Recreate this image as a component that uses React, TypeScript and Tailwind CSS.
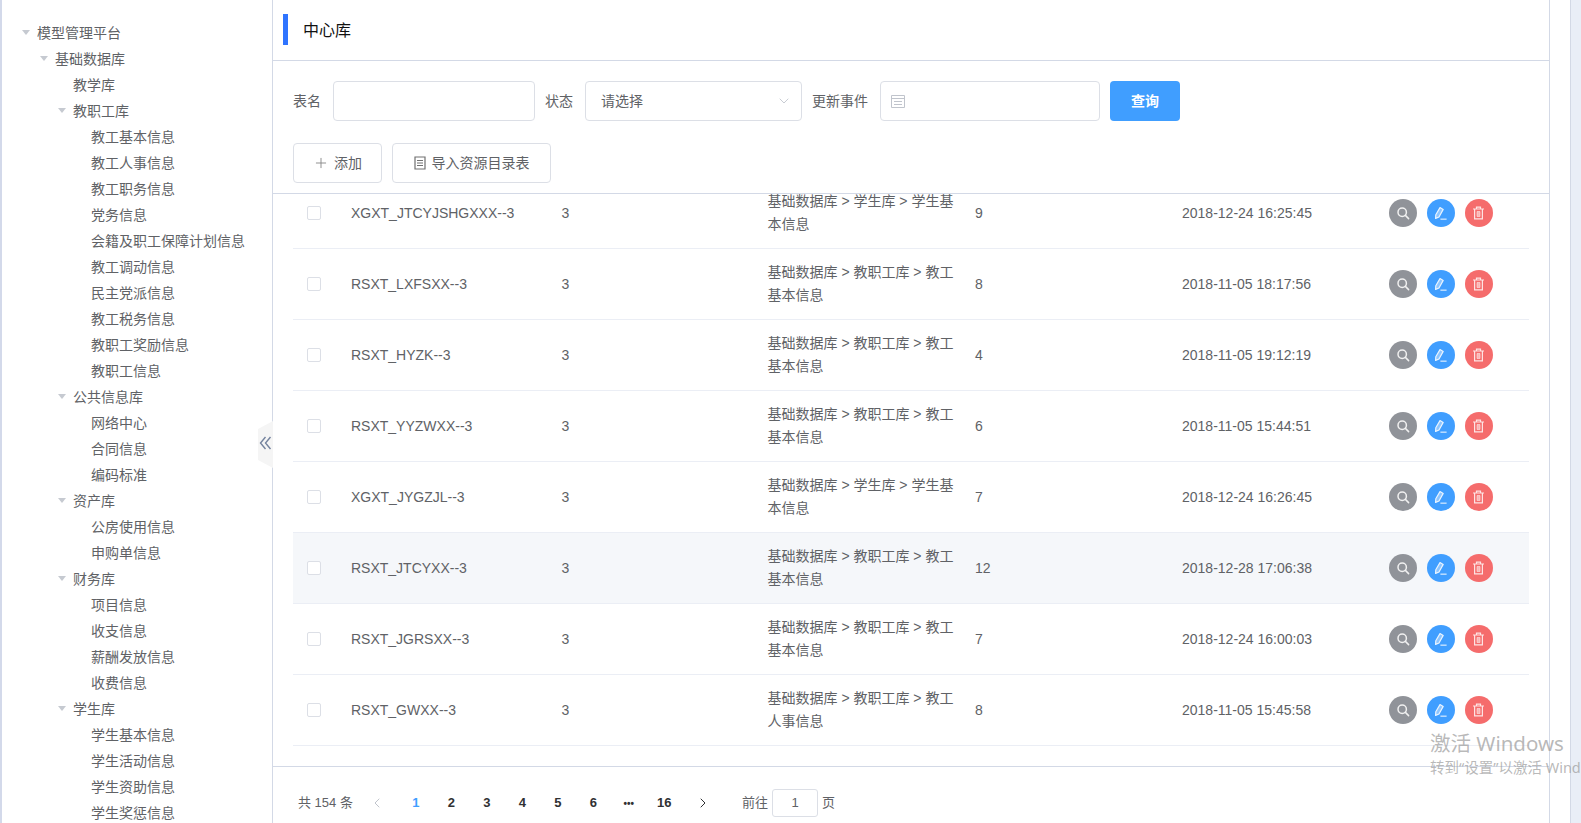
import { ChevronDown, ChevronLeft, ChevronRight, Plus } from 'lucide-react';

const font = { fontFamily: '"Liberation Sans", "Noto Sans CJK SC", sans-serif' };

const treeItems: [string, number, boolean][] = [
  ['模型管理平台', 0, true],
  ['基础数据库', 1, true],
  ['教学库', 2, false],
  ['教职工库', 2, true],
  ['教工基本信息', 3, false],
  ['教工人事信息', 3, false],
  ['教工职务信息', 3, false],
  ['党务信息', 3, false],
  ['会籍及职工保障计划信息', 3, false],
  ['教工调动信息', 3, false],
  ['民主党派信息', 3, false],
  ['教工税务信息', 3, false],
  ['教职工奖励信息', 3, false],
  ['教职工信息', 3, false],
  ['公共信息库', 2, true],
  ['网络中心', 3, false],
  ['合同信息', 3, false],
  ['编码标准', 3, false],
  ['资产库', 2, true],
  ['公房使用信息', 3, false],
  ['申购单信息', 3, false],
  ['财务库', 2, true],
  ['项目信息', 3, false],
  ['收支信息', 3, false],
  ['薪酬发放信息', 3, false],
  ['收费信息', 3, false],
  ['学生库', 2, true],
  ['学生基本信息', 3, false],
  ['学生活动信息', 3, false],
  ['学生资助信息', 3, false],
  ['学生奖惩信息', 3, false],
];

const rows = [
  ['XGXT_JTCYJSHGXXX--3', '基础数据库 > 学生库 > 学生基本信息', '9', '2018-12-24 16:25:45'],
  ['RSXT_LXFSXX--3', '基础数据库 > 教职工库 > 教工基本信息', '8', '2018-11-05 18:17:56'],
  ['RSXT_HYZK--3', '基础数据库 > 教职工库 > 教工基本信息', '4', '2018-11-05 19:12:19'],
  ['RSXT_YYZWXX--3', '基础数据库 > 教职工库 > 教工基本信息', '6', '2018-11-05 15:44:51'],
  ['XGXT_JYGZJL--3', '基础数据库 > 学生库 > 学生基本信息', '7', '2018-12-24 16:26:45'],
  ['RSXT_JTCYXX--3', '基础数据库 > 教职工库 > 教工基本信息', '12', '2018-12-28 17:06:38'],
  ['RSXT_JGRSXX--3', '基础数据库 > 教职工库 > 教工基本信息', '7', '2018-12-24 16:00:03'],
  ['RSXT_GWXX--3', '基础数据库 > 教职工库 > 教工人事信息', '8', '2018-11-05 15:45:58'],
];

function Caret() {
  return (
    <svg width="8" height="5" viewBox="0 0 8 5" className="-mt-px block">
      <path d="M0 0h8L4 5z" fill="#c6cad1" />
    </svg>
  );
}

function Sidebar() {
  return (
    <aside className="relative h-[823px] w-[271px] shrink-0 border-r border-[#d3d9e6] pt-5 text-sm text-[#606266]">
      {treeItems.map(([label, level, parent]) => (
        <div key={label} className="flex h-[26px] items-center">
          <span className={level === 0 ? 'w-[35px] pl-[20px]' : level === 1 ? 'w-[53px] pl-[38px]' : level === 2 ? 'w-[71px] pl-[56px]' : 'w-[89px]'}>
            {parent && <Caret />}
          </span>
          <span>{label}</span>
        </div>
      ))}
      <svg width="16" height="47" viewBox="0 0 16 47" className="absolute -right-px top-[421px]">
        <path d="M16 0 1 8v31l15 8z" fill="#f5f5f5" />
        <path d="M8.5 16 3.5 22 8.5 28M13.5 16 8.5 22 13.5 28" fill="none" stroke="#74839e" strokeWidth="1.4" />
      </svg>
    </aside>
  );
}

function SearchIcon() {
  return (
    <svg width="14" height="14" viewBox="0 0 14 14" fill="none" stroke="#f0f0f0" strokeWidth="1.5">
      <circle cx="6.2" cy="6.2" r="4.2" />
      <path d="m9.4 9.4 3.2 3.2" strokeLinecap="round" />
    </svg>
  );
}

function EditIcon() {
  return (
    <svg width="15" height="15" viewBox="0 0 15 15" fill="#eaf4ff">
      <path d="M7 1.6 10.2 3.4 6 11 2.6 12.4 2.8 8.8z" fill="#eaf4ff" fillOpacity="0.45" stroke="#eaf4ff" strokeWidth="1.2" strokeLinejoin="round" />
      <path d="M7.4 12.6h6.2v1.1H7.4z" />
    </svg>
  );
}

function TrashIcon() {
  return (
    <svg width="13" height="14" viewBox="0 0 13 14" fill="none" stroke="#fde4e4" strokeWidth="1.2">
      <path d="M1 3h11M4.5 3V1.2h4V3M2.6 3v9.8h7.8V3" />
      <path d="M5 5.5h3v5H5z" fill="#fde4e4" fillOpacity="0.6" strokeWidth="0.6" />
    </svg>
  );
}

function RoundButton({ bg, children }: { bg: string; children: React.ReactNode }) {
  return <button className={`flex size-7 items-center justify-center rounded-full ${bg}`}>{children}</button>;
}

function TableRow({ row, active }: { row: string[]; active: boolean }) {
  return (
    <div className={`flex h-[71px] shrink-0 items-center border-b border-[#ebeef5] text-sm ${active ? 'bg-[#f5f7fa]' : ''}`}>
      <span className="mb-px ml-[14px] size-[14px] shrink-0 rounded-[2px] border border-[#dcdfe6] bg-white" />
      <span className="mb-px ml-[30px] w-[210.5px] shrink-0">{row[0]}</span>
      <span className="mb-px w-[206px] shrink-0">3</span>
      <span className="w-[207.5px] shrink-0 pr-[16px] leading-[23px]">{row[1]}</span>
      <span className="mb-px w-[207px] shrink-0">{row[2]}</span>
      <span className="mb-px w-[206.5px] shrink-0">{row[3]}</span>
      <span className="flex shrink-0 gap-[10px]">
        <RoundButton bg="bg-[#909399]"><SearchIcon /></RoundButton>
        <RoundButton bg="bg-[#409eff]"><EditIcon /></RoundButton>
        <RoundButton bg="bg-[#f56c6c]"><TrashIcon /></RoundButton>
      </span>
    </div>
  );
}

function Pagination() {
  return (
    <div className="flex h-[57px] items-center pl-[25px] pt-[15px] text-[13px] text-[#606266]">
      <span className="w-[71px]">共 154 条</span>
      <ChevronLeft className="size-4 text-[#c0c4cc]" strokeWidth={1.5} />
      <div className="ml-[13px] flex items-center font-bold text-[#303133]">
        {['1', '2', '3', '4', '5', '6', '•••', '16'].map((p, i) => (
          <span key={p} className={`w-[35.5px] text-center ${i === 0 ? 'text-[#409eff]' : ''} ${i === 6 ? 'text-[10px] leading-[13px]' : ''}`}>
            {p}
          </span>
        ))}
      </div>
      <ChevronRight className="ml-[13px] size-4 text-[#303133]" strokeWidth={1.5} />
      <span className="ml-[31px]">前往</span>
      <span className="ml-[4px] flex h-7 w-[46px] items-center justify-center rounded-[3px] border border-[#dcdfe6] text-[#606266]">1</span>
      <span className="ml-[4px]">页</span>
    </div>
  );
}

export default function App() {
  return (
    <div style={font} className="relative flex h-[823px] w-[1581px] overflow-hidden bg-white text-[#606266]">
      <div className="w-[2px] shrink-0 bg-[#d3d9ea]" />
      <Sidebar />
      <main className="flex h-[823px] w-[1277px] shrink-0 flex-col border-r border-[#d3d9e6]">
        <header className="flex h-[61px] shrink-0 items-center border-b border-[#d3d9e6] pb-[1px]">
          <span className="ml-[10px] h-[31px] w-[5px] bg-[#2f74ff]" />
          <span className="ml-[15px] mt-[2px] text-base text-[#111]">中心库</span>
        </header>
        <section className="h-[133px] shrink-0 border-b border-[#d3d9e6] pl-[20px] pt-[20px] text-sm">
          <div className="flex h-10 items-center">
            <span className="w-[40px]">表名</span>
            <span className="h-10 w-[202px] rounded border border-[#dcdfe6]" />
            <span className="ml-[10px] w-[40px]">状态</span>
            <div className="flex h-10 w-[217px] items-center justify-between rounded border border-[#dcdfe6] pl-[15px] pr-[9px]">
              <span>请选择</span>
              <ChevronDown className="size-4 text-[#c8ccd3]" strokeWidth={1.5} />
            </div>
            <span className="ml-[10px] w-[68px]">更新事件</span>
            <div className="flex h-10 w-[220px] items-center rounded border border-[#dcdfe6] pl-[10px]">
              <svg width="14" height="14" viewBox="0 0 14 14" fill="none" stroke="#c0c4cc">
                <path d="M.5 1.5h13v12H.5zM.5 4.5h13M3 7.5h8M3 10.5h8" />
              </svg>
            </div>
            <button className="ml-[10px] h-10 w-[70px] rounded bg-[#409eff] font-bold text-white">查询</button>
          </div>
          <div className="mt-[22px] flex gap-[10px]">
            <button className="flex h-10 w-[89px] items-center justify-center gap-[5px] rounded border border-[#dcdfe6]">
              <Plus className="size-4 text-[#808080]" strokeWidth={1.3} />
              添加
            </button>
            <button className="flex h-10 w-[159px] items-center justify-center gap-[6px] rounded border border-[#dcdfe6]">
              <svg width="12" height="14" viewBox="0 0 12 14" fill="none" stroke="#707070" strokeWidth="1.2">
                <path d="M1 1h10v12H1zM3 4.5h6M3 7h6M3 9.5h6" />
              </svg>
              导入资源目录表
            </button>
          </div>
        </section>
        <div className="h-[572px] shrink-0 overflow-hidden px-[20px]">
          <div className="-mt-[16px] flex flex-col">
            {rows.map((row, i) => (
              <TableRow key={row[0]} row={row} active={i === 5} />
            ))}
          </div>
        </div>
        <footer className="shrink-0 border-t border-[#d3d9e6]">
          <Pagination />
        </footer>
      </main>
      <div className="w-[21px] shrink-0 border-r border-[#d3d9e6]" />
      <div className="flex-1 bg-[#e9eef7]" />
      <div className="absolute left-[1430px] top-[729px] whitespace-nowrap text-[#9a9a9a]/70" style={{ fontFamily: '"Noto Sans", "Noto Sans CJK SC", sans-serif' }}>
        <div className="text-[20.5px] leading-[28px]">激活 Windows</div>
        <div className="text-[14.5px] leading-[20px]">转到“设置”以激活 Windows。</div>
      </div>
    </div>
  );
}
